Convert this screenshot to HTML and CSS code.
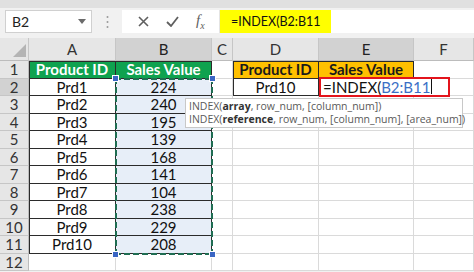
FILE: index.html
```html
<!DOCTYPE html>
<html lang="en">
<head>
    <meta charset="UTF-8">
    <title>INDEX</title>
    <link rel="stylesheet" href="styles.css">
</head>
<body>
    <div class="strip"></div>
    <div class="fbar">
        <div class="namebox">
            <span>B2</span>
            <svg class="caret" width="8" height="5" viewBox="0 0 8 5"><path d="M0 0h8L4 5z" fill="#6b6b6b"/></svg>
        </div>
        <div class="dots">
            <svg width="3" height="14" viewBox="0 0 3 14"><circle cx="1.5" cy="2" r="1" fill="#9a9a9a"/><circle cx="1.5" cy="7" r="1" fill="#9a9a9a"/><circle cx="1.5" cy="12" r="1" fill="#9a9a9a"/></svg>
        </div>
        <div class="fxbox">
            <svg width="11" height="11" viewBox="0 0 11 11"><path d="M1 1l9 9M10 1l-9 9" stroke="#5f5f5f" stroke-width="1.6" fill="none"/></svg>
            <svg width="13" height="11" viewBox="0 0 13 11"><path d="M1 6l4 4 7-9" stroke="#5f5f5f" stroke-width="1.8" fill="none"/></svg>
            <span class="fx">f<sub>x</sub></span>
        </div>
        <div class="input"><span class="hl">=INDEX(B2:B11</span></div>
    </div>
    <div class="sheet">
        <div class="ch corner"><svg width="13" height="13" viewBox="0 0 13 13"><path d="M13 0v13H0z" fill="#b4b4b4"/></svg></div>
        <div class="ch">A</div>
        <div class="ch sel">B</div>
        <div class="ch">C</div>
        <div class="ch">D</div>
        <div class="ch sel">E</div>
        <div class="ch">F</div>

        <div class="rh">1</div>
        <div class="c t g left top">Product ID</div>
        <div class="c t g top">Sales Value</div>
        <div class="c"></div>
        <div class="c t o left top">Product ID</div>
        <div class="c t o top">Sales Value</div>
        <div class="c"></div>

        <div class="rh sel">2</div>
        <div class="c t left">Prd1</div>
        <div class="c t ref">224</div>
        <div class="c"></div>
        <div class="c t left">Prd10</div>
        <div class="c t edit">
            <span class="editor">=INDEX(<span class="blue">B2:B11</span><span class="cursor"></span></span>
        </div>
        <div class="c"></div>

        <div class="rh">3</div>
        <div class="c t left">Prd2</div>
        <div class="c t ref">240</div>
        <div class="c"></div><div class="c"></div><div class="c"></div><div class="c"></div>

        <div class="rh">4</div>
        <div class="c t left">Prd3</div>
        <div class="c t ref">195</div>
        <div class="c"></div><div class="c"></div><div class="c"></div><div class="c"></div>

        <div class="rh">5</div>
        <div class="c t left">Prd4</div>
        <div class="c t ref">139</div>
        <div class="c"></div><div class="c"></div><div class="c"></div><div class="c"></div>

        <div class="rh">6</div>
        <div class="c t left">Prd5</div>
        <div class="c t ref">168</div>
        <div class="c"></div><div class="c"></div><div class="c"></div><div class="c"></div>

        <div class="rh">7</div>
        <div class="c t left">Prd6</div>
        <div class="c t ref">141</div>
        <div class="c"></div><div class="c"></div><div class="c"></div><div class="c"></div>

        <div class="rh">8</div>
        <div class="c t left">Prd7</div>
        <div class="c t ref">104</div>
        <div class="c"></div><div class="c"></div><div class="c"></div><div class="c"></div>

        <div class="rh">9</div>
        <div class="c t left">Prd8</div>
        <div class="c t ref">238</div>
        <div class="c"></div><div class="c"></div><div class="c"></div><div class="c"></div>

        <div class="rh">10</div>
        <div class="c t left">Prd9</div>
        <div class="c t ref">229</div>
        <div class="c"></div><div class="c"></div><div class="c"></div><div class="c"></div>

        <div class="rh">11</div>
        <div class="c t left">Prd10</div>
        <div class="c t ref">208</div>
        <div class="c"></div><div class="c"></div><div class="c"></div><div class="c"></div>

        <div class="rh">12</div>
        <div class="c"></div><div class="c"></div><div class="c"></div><div class="c"></div><div class="c"></div><div class="c"></div>

        <div class="marquee">
            <span class="handle h1"></span>
            <span class="handle h2"></span>
            <span class="handle h3"></span>
            <span class="handle h4"></span>
        </div>

        <div class="tip">
            <div>INDEX(<b>array</b>, row_num, [column_num])</div>
            <div>INDEX(<b>reference</b>, row_num, [column_num], [area_num])</div>
        </div>
    </div>
</body>
</html>
```

FILE: styles.css
```css
body {
    margin: 0;
    background: #f1f1f1;
    font-family: Lato, "Liberation Sans", sans-serif;
}
.strip {
    height: 8px;
    background: #e0e0e0;
}
.fbar {
    display: flex;
    align-items: stretch;
    height: 23px;
    margin-top: 2px;
    margin-bottom: 5px;
}
.namebox {
    width: 87px;
    margin-left: 5px;
    background: #fff;
    border: 1px solid #d0d0d0;
    box-sizing: border-box;
    display: flex;
    align-items: center;
    justify-content: space-between;
    padding: 0 5px 0 6px;
    font-size: 14px;
    color: #222;
}
.dots {
    width: 30px;
    display: flex;
    align-items: center;
    justify-content: center;
}
.fxbox {
    width: 98px;
    background: #fff;
    display: flex;
    align-items: center;
    justify-content: space-around;
    padding: 0 6px 0 8px;
    box-sizing: border-box;
    border-right: 1px solid #e4e4e4;
}
.fx {
    font-family: "Liberation Serif", serif;
    font-style: italic;
    font-size: 15px;
    color: #5f5f5f;
}
.fx sub {
    font-size: 10px;
}
.input {
    flex: 1;
    background: #fff;
    display: flex;
}
.hl {
    background: #ffff00;
    width: 111px;
    padding-left: 11px;
    box-sizing: border-box;
    line-height: 23px;
    font-size: 12.5px;
    color: #111;
}
.sheet {
    position: relative;
    display: grid;
    grid-template-columns: 29px 87px 96px 21px 86px 95px 1fr;
    grid-template-rows: 23px repeat(12, 17.5px);
    background: #fff;
    font-size: 15px;
    color: #111;
}
.ch {
    background: #e6e6e6;
    border-right: 1px solid #c6c6c6;
    border-bottom: 1px solid #bcbcbc;
    box-sizing: border-box;
    display: flex;
    align-items: center;
    justify-content: center;
    color: #333;
}
.ch.sel {
    background: #d2d2d2;
    color: #222;
}
.corner {
    justify-content: flex-end;
    align-items: flex-end;
    padding: 0 2px 3px 0;
}
.rh {
    background: #e6e6e6;
    border-right: 1px solid #bcbcbc;
    border-bottom: 1px solid #c6c6c6;
    box-sizing: border-box;
    display: flex;
    align-items: center;
    justify-content: center;
    color: #333;
}
.rh.sel {
    background: #d2d2d2;
}
.c {
    border-right: 1px solid #dadada;
    border-bottom: 1px solid #dadada;
    box-sizing: border-box;
    display: flex;
    align-items: center;
    justify-content: center;
    white-space: nowrap;
}
.t {
    border-right-color: #2b2b2b;
    border-bottom-color: #2b2b2b;
}
.t.left {
    box-shadow: inset 1px 0 #2b2b2b;
}
.t.top {
    box-shadow: inset 0 1px #2b2b2b;
}
.t.left.top {
    box-shadow: inset 1px 1px #2b2b2b;
}
.g {
    background: #0fa24f;
    color: #fff;
    font-weight: bold;
}
.o {
    background: #ffc000;
    color: #1a1a1a;
    font-weight: bold;
}
.ref {
    background: #e7eef8;
}
.edit {
    position: relative;
}
.editor {
    position: absolute;
    left: 0;
    top: -2px;
    width: 131px;
    height: 20px;
    box-sizing: border-box;
    border: 2px solid #e3141c;
    background: #fff;
    display: flex;
    align-items: center;
    padding-left: 2px;
    font-size: 15px;
    z-index: 1;
}
.blue {
    color: #3b6fc6;
}
.cursor {
    display: inline-block;
    width: 1px;
    height: 15px;
    margin-left: 1px;
    background: #111;
}
.marquee {
    grid-column: 3 / 4;
    grid-row: 3 / 13;
    position: absolute;
    top: -1px;
    left: -1px;
    right: -1px;
    bottom: -1px;
    background:
        repeating-linear-gradient(90deg, #1f6d52 0 6px, transparent 6px 9px) top left / 100% 2px no-repeat,
        repeating-linear-gradient(90deg, #1f6d52 0 6px, transparent 6px 9px) bottom left / 100% 2px no-repeat,
        repeating-linear-gradient(180deg, #1f6d52 0 6px, transparent 6px 9px) top left / 2px 100% no-repeat,
        repeating-linear-gradient(180deg, #1f6d52 0 6px, transparent 6px 9px) top right / 2px 100% no-repeat;
}
.handle {
    position: absolute;
    width: 5px;
    height: 5px;
    background: #3a66c4;
    border: 1px solid #fff;
}
.h1 { left: -3px; top: -3px; }
.h2 { right: -3px; top: -3px; }
.h3 { left: -3px; bottom: -3px; }
.h4 { right: -3px; bottom: -3px; }
.tip {
    position: absolute;
    left: 185px;
    top: 60px;
    width: 278px;
    box-sizing: border-box;
    background: #fff;
    border: 1px solid #c8c8c8;
    padding: 1px 3px 2px 3px;
    font-family: "Open Sans", sans-serif;
    font-size: 10.5px;
    line-height: 12.5px;
    white-space: nowrap;
    color: #5a5a5a;
    z-index: 2;
}
.tip b {
    color: #333;
}
```
